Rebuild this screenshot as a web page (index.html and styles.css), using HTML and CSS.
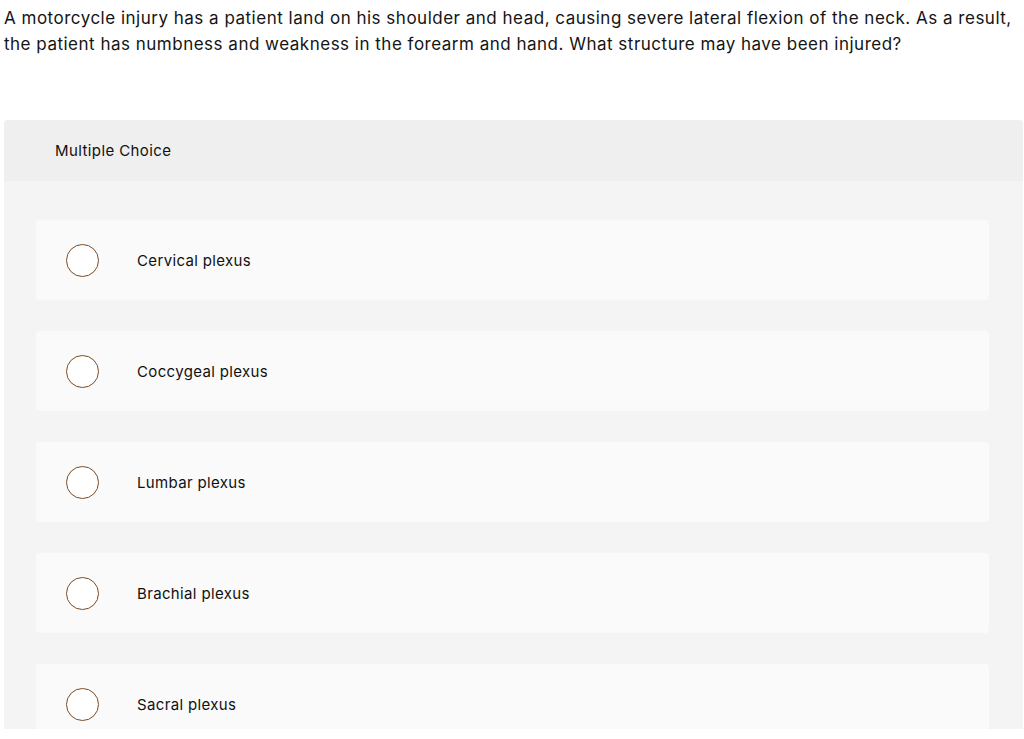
FILE: index.html
```html
<!DOCTYPE html>
<html>
<head>
<meta charset="utf-8">
<link rel="stylesheet" href="styles.css">
</head>
<body>
<p class="question">A motorcycle injury has a patient land on his shoulder and head, causing severe lateral flexion of the neck. As a result, the patient has numbness and weakness in the forearm and hand. What structure may have been injured?</p>
<div class="mc">
  <div class="mc-head">Multiple Choice</div>
  <div class="mc-body">
    <div class="opt"><span class="radio"></span><span class="label">Cervical plexus</span></div>
    <div class="opt"><span class="radio"></span><span class="label">Coccygeal plexus</span></div>
    <div class="opt"><span class="radio"></span><span class="label">Lumbar plexus</span></div>
    <div class="opt"><span class="radio"></span><span class="label">Brachial plexus</span></div>
    <div class="opt"><span class="radio"></span><span class="label">Sacral plexus</span></div>
  </div>
</div>
</body>
</html>
```
FILE: styles.css
```css
html, body {
  margin: 0;
  padding: 0;
  background: #fff;
}
body {
  font-family: Inter, "Open Sans", "Liberation Sans", sans-serif;
  color: #111;
  overflow: hidden;
  height: 739px;
}
.question {
  margin: 0;
  padding: 5px 6px 0 4px;
  font-size: 17px;
  line-height: 26px;
  letter-spacing: 0.5px;
  color: #141414;
}
.mc {
  margin: 63px 1px 0 4px;
  height: 609px;
  overflow: hidden;
  border-radius: 4px 4px 0 0;
  background: #f4f4f4;
}
.mc-head {
  height: 61px;
  background: #efefef;
  display: flex;
  align-items: center;
  padding-left: 51px;
  font-size: 15px;
  letter-spacing: 0.4px;
  color: #111;
}
.mc-body {
  padding: 39px 34px 0 32px;
  display: flex;
  flex-direction: column;
  gap: 31px;
}
.opt {
  height: 80px;
  flex: none;
  background: #fafafa;
  border-radius: 4px;
  display: flex;
  align-items: center;
  padding-left: 30px;
}
.radio {
  width: 31px;
  height: 31px;
  border: 1.5px solid #7b4a22;
  border-radius: 50%;
  background: #fff;
  flex: none;
}
.label {
  margin-left: 38px;
  font-size: 15px;
  letter-spacing: 0.35px;
  color: #111;
}
```
